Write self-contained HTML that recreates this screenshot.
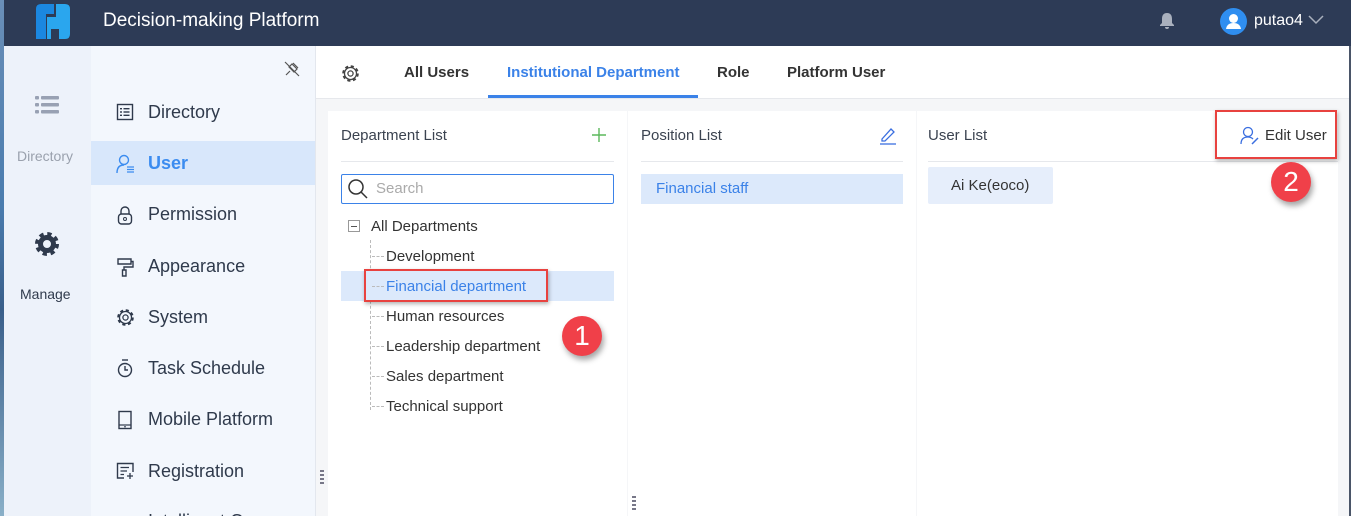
<!DOCTYPE html>
<html style="overflow:hidden;width:1351px;height:516px"><head><meta charset="utf-8"><style>
*{margin:0;padding:0;box-sizing:border-box}
html,body{overflow:hidden}
body{width:1351px;height:516px;overflow:hidden;position:relative;font-family:"Liberation Sans",Arial,sans-serif;background:#f5f6f8;color:#333}
.a{position:absolute}
.hdr{left:0;top:0;width:1351px;height:46px;background:#2d3b56}
.rail{left:4px;top:46px;width:87px;height:470px;background:#edf2fa}
.menu{left:91px;top:46px;width:225px;height:470px;background:#f3f7fd;border-right:1px solid #e3e7ee}
.mi{position:absolute;left:148px;font-size:18px;color:#2f3a4c}
.ic{position:absolute;left:116px}
.tab{position:absolute;top:64px;font-size:15px;font-weight:bold;color:#333}
.panel{position:absolute;top:111px;height:405px;background:#fff}
.ph{position:absolute;top:127px;font-size:15px;color:#3b4350}
.tree{position:absolute;left:386px;font-size:15px;color:#333}
.badge{position:absolute;width:40px;height:40px;border-radius:50%;background:#f04049;color:#fff;font-size:28px;text-align:center;line-height:40px;box-shadow:2px 4px 6px rgba(0,0,0,.35)}
</style></head><body>
<div class="a hdr"></div>
<div class="a" style="left:0;top:0;width:4px;height:516px;background:linear-gradient(#6a8fb8,#4a7cae 40%,#3a5f8a 60%,#8ab0c8)"></div>
<svg class="a" style="left:34px;top:3px" width="38" height="37" viewBox="0 0 38 37"><path d="M2 6 Q2 1 7 1 H20 V11 H12 V36 H2Z" fill="#1b87e0"/><path d="M22 1 H31 Q36 1 36 6 V31 Q36 36 31 36 H25 V26 H17 V36 H13 V14 H22Z" fill="#2aa6ee"/></svg>
<div class="a" style="left:103px;top:10px;color:#fff;font-size:19px">Decision-making Platform</div>
<svg class="a" style="left:1159px;top:12px" width="16" height="18" viewBox="0 0 16 18"><path d="M8 1 C4 1 3 4 3 7 V11 L1 13 V14 H15 V13 L13 11 V7 C13 4 12 1 8 1Z M6 15 a2 2 0 0 0 4 0Z" fill="#a9b0bd"/></svg>
<div class="a" style="left:1220px;top:8px;width:27px;height:27px;border-radius:50%;background:#2f8ef0"></div>
<svg class="a" style="left:1220px;top:8px" width="27" height="27" viewBox="0 0 27 27"><circle cx="13.5" cy="10.5" r="4.5" fill="#fff"/><path d="M6 21 Q7 15 13.5 15 Q20 15 21 21Z" fill="#fff"/></svg>
<div class="a" style="left:1254px;top:12px;color:#fff;font-size:16px">putao4</div>
<svg class="a" style="left:1308px;top:15px" width="16" height="10"><path d="M1 1 L8 8 L15 1" stroke="#a9b0bd" stroke-width="1.5" fill="none"/></svg>

<div class="a rail"></div>
<svg class="a" style="left:35px;top:96px" width="24" height="20"><g fill="#98a1b3"><rect x="0" y="0" width="4" height="3.5" rx="1"/><rect x="6" y="0" width="18" height="3.5" rx="1"/><rect x="0" y="7" width="4" height="3.5" rx="1"/><rect x="6" y="7" width="18" height="3.5" rx="1"/><rect x="0" y="14" width="4" height="3.5" rx="1"/><rect x="6" y="14" width="18" height="3.5" rx="1"/></g></svg>
<div class="a" style="left:17px;top:148px;font-size:14px;color:#9aa1ad">Directory</div>
<svg class="a" style="left:34px;top:231px" width="26" height="26" viewBox="0 0 26 26"><circle cx="13" cy="13" r="10" fill="none" stroke="#2f3a4c" stroke-width="4" stroke-dasharray="4.2 3.65"/><circle cx="13" cy="13" r="6.5" fill="none" stroke="#2f3a4c" stroke-width="5"/></svg>
<div class="a" style="left:20px;top:286px;font-size:14px;color:#2f3a4c">Manage</div>

<div class="a menu"></div>
<svg class="a" style="left:283px;top:60px" width="18" height="18" viewBox="0 0 18 18"><path d="M3 15 L7 11 M6 7 L11 12 L14 9 L9 4Z M10 3 L15 8 M2 2 L16 16" stroke="#555" stroke-width="1.2" fill="none"/></svg>
<div class="a" style="left:91px;top:141px;width:224px;height:44px;background:#d8e7fb"></div>
<svg class="ic" style="top:103px" width="18" height="18"><rect x="1.5" y="1.5" width="15" height="15" fill="none" stroke="#2f3a4c" stroke-width="1.4"/><g fill="#2f3a4c"><rect x="4" y="5" width="2" height="1.4"/><rect x="7.5" y="5" width="6" height="1.4"/><rect x="4" y="8.3" width="2" height="1.4"/><rect x="7.5" y="8.3" width="6" height="1.4"/><rect x="4" y="11.6" width="2" height="1.4"/><rect x="7.5" y="11.6" width="6" height="1.4"/></g></svg>
<div class="mi" style="top:102px">Directory</div>
<svg class="ic" style="top:154px" width="20" height="20"><circle cx="8" cy="6" r="4.5" fill="none" stroke="#3b8cf0" stroke-width="1.4"/><path d="M1 19 Q1 11 8 11" fill="none" stroke="#3b8cf0" stroke-width="1.4"/><path d="M11 13 H18 M11 15.5 H18 M11 18 H18" stroke="#3b8cf0" stroke-width="1.3"/></svg>
<div class="mi" style="top:153px;color:#3b8cf0;font-weight:bold">User</div>
<svg class="ic" style="top:205px" width="18" height="20"><path d="M5 9 V6 a4 4 0 0 1 8 0 V9" fill="none" stroke="#2f3a4c" stroke-width="1.4"/><rect x="2.5" y="9" width="13" height="10" rx="3" fill="none" stroke="#2f3a4c" stroke-width="1.4"/><circle cx="9" cy="14" r="1.5" fill="none" stroke="#2f3a4c"/></svg>
<div class="mi" style="top:204px">Permission</div>
<svg class="ic" style="top:257px" width="18" height="20"><path d="M2 2 H15 V7 H2Z M15 4.5 H17 V10 H8 V13 M6.5 13 H10 V19 H6.5Z" fill="none" stroke="#2f3a4c" stroke-width="1.4"/></svg>
<div class="mi" style="top:256px">Appearance</div>
<svg class="ic" style="top:308px" width="19" height="19" viewBox="0 0 19 19"><circle cx="9.5" cy="9.5" r="7" fill="none" stroke="#2f3a4c" stroke-width="2.6" stroke-dasharray="3 2.5"/><circle cx="9.5" cy="9.5" r="6" fill="#f3f7fd" stroke="#2f3a4c" stroke-width="1.3"/><circle cx="9.5" cy="9.5" r="2.6" fill="none" stroke="#2f3a4c" stroke-width="1.3"/></svg>
<div class="mi" style="top:307px">System</div>
<svg class="ic" style="top:358px" width="18" height="20"><path d="M6 2 H12" stroke="#2f3a4c" stroke-width="1.4"/><circle cx="9" cy="12" r="6.5" fill="none" stroke="#2f3a4c" stroke-width="1.4"/><path d="M9 8 V12 H12" fill="none" stroke="#2f3a4c" stroke-width="1.4"/></svg>
<div class="mi" style="top:358px">Task Schedule</div>
<svg class="ic" style="top:410px" width="18" height="20"><rect x="3" y="1.5" width="12" height="17" fill="none" stroke="#2f3a4c" stroke-width="1.4"/><path d="M3 15 H15" stroke="#2f3a4c" stroke-width="1.2"/><rect x="8.3" y="16" width="1.4" height="1.4" fill="#2f3a4c"/></svg>
<div class="mi" style="top:409px">Mobile Platform</div>
<svg class="ic" style="top:462px" width="20" height="18"><path d="M8 16 H1.5 V1.5 H17 V10" fill="none" stroke="#2f3a4c" stroke-width="1.4"/><path d="M4.5 5.5 H13 M4.5 9 H11 M4.5 12.5 H8 M11 14 H17 M14 11 V17" stroke="#2f3a4c" stroke-width="1.3"/></svg>
<div class="mi" style="top:461px">Registration</div>
<div class="mi" style="top:511px">Intelligent O</div>

<div class="a" style="left:316px;top:46px;width:1035px;height:53px;background:#fff;border-bottom:1px solid #e6e8ec"></div>
<svg class="a" style="left:341px;top:64px" width="19" height="19" viewBox="0 0 19 19"><circle cx="9.5" cy="9.5" r="7" fill="none" stroke="#444" stroke-width="2.6" stroke-dasharray="3 2.5"/><circle cx="9.5" cy="9.5" r="6" fill="#fff" stroke="#444" stroke-width="1.3"/><circle cx="9.5" cy="9.5" r="2.6" fill="none" stroke="#444" stroke-width="1.3"/></svg>
<div class="tab" style="left:404px">All Users</div>
<div class="tab" style="left:507px;color:#3b82e8">Institutional Department</div>
<div class="a" style="left:488px;top:95px;width:210px;height:3px;background:#3b82e8"></div>
<div class="tab" style="left:717px">Role</div>
<div class="tab" style="left:787px">Platform User</div>

<div class="panel" style="left:328px;width:299px"></div>
<div class="panel" style="left:628px;width:288px"></div>
<div class="panel" style="left:917px;width:421px"></div>
<div class="a" style="left:1349px;top:46px;width:2px;height:470px;background:#4a5568"></div>

<div class="ph" style="left:341px">Department List</div>
<svg class="a" style="left:591px;top:127px" width="16" height="16"><path d="M8 1 V15 M1 8 H15" stroke="#5cb85c" stroke-width="1.4"/></svg>
<div class="a" style="left:341px;top:161px;width:273px;height:1px;background:#e6e8ec"></div>
<div class="a" style="left:341px;top:174px;width:273px;height:30px;border:1px solid #3b82e8;border-radius:2px;background:#fff"></div>
<svg class="a" style="left:347px;top:178px" width="22" height="22"><circle cx="9" cy="9" r="7" fill="none" stroke="#333" stroke-width="1.5"/><path d="M14 14 L20 20" stroke="#333" stroke-width="1.5"/></svg>
<div class="a" style="left:376px;top:180px;font-size:15px;color:#aaa">Search</div>
<div class="a" style="left:348px;top:220px;width:12px;height:12px;border:1px solid #999"></div>
<div class="a" style="left:351px;top:225.5px;width:6px;height:1px;background:#555"></div>
<div class="tree" style="left:371px;top:218px">All Departments</div>
<div class="a" style="left:370px;top:240px;width:0;height:170px;border-left:1px dashed #bbb"></div>
<div class="a" style="left:341px;top:271px;width:273px;height:30px;background:#dce9fb"></div>
<div class="a" style="left:364px;top:269px;width:184px;height:33px;border:2px solid #e8423f;box-shadow:1px 2px 4px rgba(0,0,0,.3)"></div>
<div class="tree" style="top:248px"><span style="position:absolute;left:-14px;top:8px;width:12px;border-top:1px dashed #bbb"></span>Development</div>
<div class="tree" style="top:278px;color:#3b82e8"><span style="position:absolute;left:-14px;top:8px;width:12px;border-top:1px dashed #bbb"></span>Financial department</div>
<div class="tree" style="top:308px"><span style="position:absolute;left:-14px;top:8px;width:12px;border-top:1px dashed #bbb"></span>Human resources</div>
<div class="tree" style="top:338px"><span style="position:absolute;left:-14px;top:8px;width:12px;border-top:1px dashed #bbb"></span>Leadership department</div>
<div class="tree" style="top:368px"><span style="position:absolute;left:-14px;top:8px;width:12px;border-top:1px dashed #bbb"></span>Sales department</div>
<div class="tree" style="top:398px"><span style="position:absolute;left:-14px;top:8px;width:12px;border-top:1px dashed #bbb"></span>Technical support</div>
<div class="badge" style="left:562px;top:316px">1</div>
<div class="a" style="left:320px;top:470px;width:3px;height:14px;border-left:2px dotted #778;border-right:2px dotted #778"></div>
<div class="a" style="left:632px;top:496px;width:3px;height:14px;border-left:2px dotted #778;border-right:2px dotted #778"></div>

<div class="ph" style="left:641px">Position List</div>
<svg class="a" style="left:879px;top:126px" width="18" height="20"><path d="M3 13 L12 3 L15 6 L6 15 H3Z" fill="none" stroke="#3b6fe0" stroke-width="1.3"/><path d="M1 18 H17" stroke="#3b6fe0" stroke-width="1.3"/></svg>
<div class="a" style="left:641px;top:161px;width:262px;height:1px;background:#e6e8ec"></div>
<div class="a" style="left:641px;top:174px;width:262px;height:30px;background:#dce9fb"></div>
<div class="a" style="left:656px;top:180px;font-size:15px;color:#3b82e8">Financial staff</div>

<div class="ph" style="left:928px">User List</div>
<div class="a" style="left:928px;top:161px;width:410px;height:1px;background:#e6e8ec"></div>
<div class="a" style="left:928px;top:167px;width:125px;height:37px;background:#e6eefb;border-radius:2px"></div>
<div class="a" style="left:951px;top:177px;font-size:15px;color:#333">Ai Ke(eoco)</div>
<div class="a" style="left:1215px;top:110px;width:122px;height:49px;border:2px solid #e8423f;box-shadow:1px 2px 4px rgba(0,0,0,.3)"></div>
<svg class="a" style="left:1240px;top:126px" width="20" height="20"><circle cx="8" cy="6" r="4.5" fill="none" stroke="#3b6fe0" stroke-width="1.3"/><path d="M1 18 Q1 11 8 11 Q11 11 13 13" fill="none" stroke="#3b6fe0" stroke-width="1.3"/><path d="M12 18 L18 12" stroke="#3b6fe0" stroke-width="1.5"/></svg>
<div class="a" style="left:1265px;top:127px;font-size:15px;color:#333">Edit User</div>
<div class="badge" style="left:1271px;top:162px">2</div>
</body></html>
